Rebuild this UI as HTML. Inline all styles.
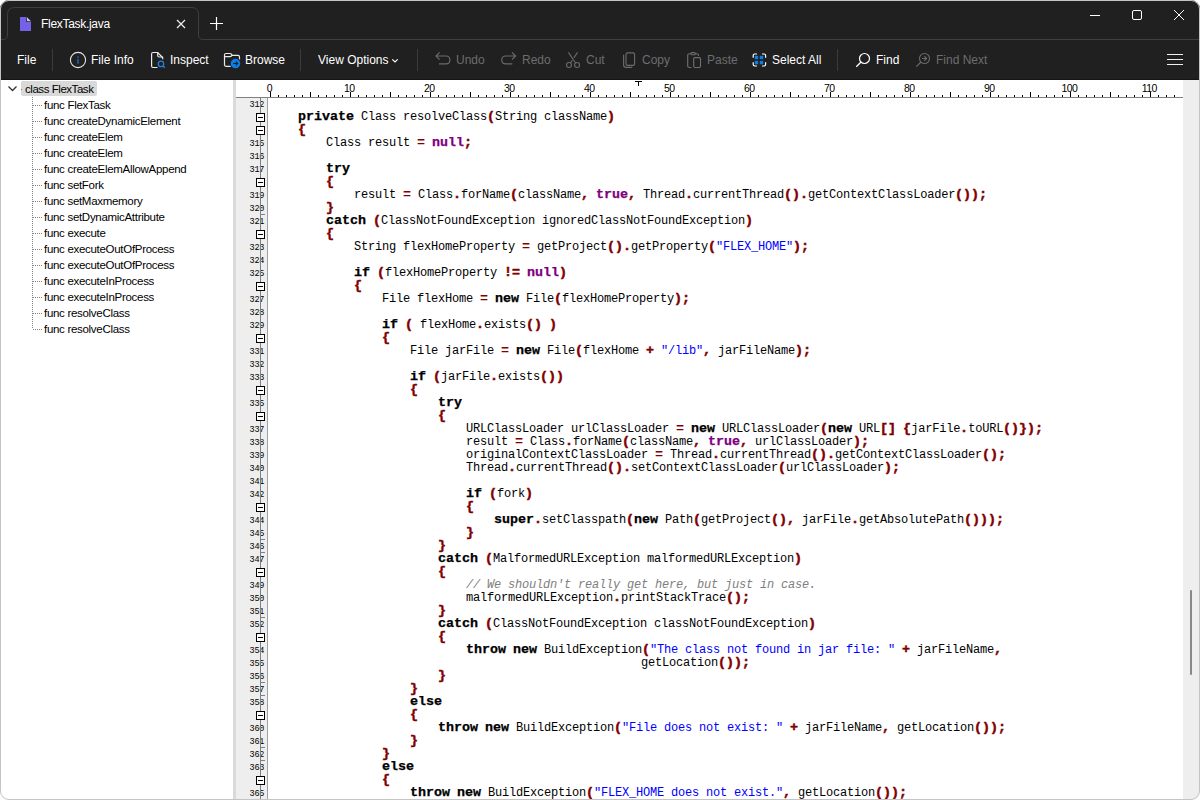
<!DOCTYPE html>
<html><head><meta charset="utf-8">
<style>
*{margin:0;padding:0;box-sizing:border-box}
html,body{width:1200px;height:800px;overflow:hidden;background:#ffffff}
body{position:relative;font-family:"Liberation Sans",sans-serif}
.win{position:absolute;left:0;top:0;width:1200px;height:800px;border-radius:9px;overflow:hidden;background:#fff}
.frame{position:absolute;left:0;top:0;width:1200px;height:800px;border:1px solid #c4c4c4;border-radius:9px}
.dark{position:absolute;left:0;top:0;width:1200px;height:80px;background:#202020}
.abs{position:absolute}
.tt{position:absolute;color:#ffffff;font-size:12px;white-space:nowrap;line-height:14px}
.dis{color:#6d6d6d}
.sep{position:absolute;top:49px;width:1px;height:22px;background:#3b3b3b}
.side{position:absolute;left:0;top:80px;width:233px;height:720px;background:#fff}
.split{position:absolute;left:233px;top:80px;width:3px;height:720px;background:#dadada}
.ruler{position:absolute;left:236px;top:80px;width:947px;height:18px;background:#fff}
.rbase{position:absolute;left:236px;top:97px;width:947px;height:1px;background:#808080}
.tk{position:absolute;width:1px;background:#000}
.rl{position:absolute;top:83px;width:40px;text-align:center;font-family:"Liberation Sans",sans-serif;font-size:10.5px;line-height:11px;color:#000;letter-spacing:-0.6px;text-indent:0.6px}
.gut{position:absolute;left:236px;top:98px;width:31px;height:702px;background:#eeeeee}
.fline{position:absolute;left:260px;top:98px;width:1px;height:702px;background:#808080}
.gborder{position:absolute;left:267px;top:98px;width:1px;height:702px;background:#a0a0a0}
.gn{position:absolute;left:236px;width:28px;text-align:right;font-family:"Liberation Mono",monospace;font-size:8.5px;line-height:13px;color:#000;letter-spacing:-0.3px}
.fb{position:absolute;left:256px;width:9px;height:9px;border:1px solid #000;background:#fff}
.fb::after{content:"";position:absolute;left:1px;top:3px;width:5px;height:1px;background:#000}
.em{position:absolute;left:261px;width:4px;height:1px;background:#808080}
.code{position:absolute;left:268px;top:98px;width:915px;height:702px;background:#fff}
.ln{position:absolute;white-space:pre;font-family:"Liberation Mono",monospace;font-size:12px;line-height:13px;height:13px;color:#000;letter-spacing:-0.2px}
.ln b{font-weight:bold;letter-spacing:0;-webkit-text-stroke:0.25px currentColor;display:inline-block;transform:scaleX(1.111);transform-origin:0 0;height:13px;vertical-align:top}
.ln i{font-style:normal}
.kw{color:#000}
.li{color:#800080}
.op{color:#800000}
.ln b.op{-webkit-text-stroke:0.45px currentColor}
.ln b.eq{-webkit-text-stroke:0}
.st{color:#0000ff}
.cm{color:#808080;font-style:italic !important}
.sb{position:absolute;left:1183px;top:80px;width:16px;height:720px;background:#eeeeee}
.thumb{position:absolute;left:1190px;top:590px;width:2px;height:85px;background:#888888;border-radius:1px}
.ti{position:absolute;left:44px;font-size:11.5px;line-height:16px;height:16px;color:#000;white-space:nowrap;letter-spacing:-0.3px}
.th{position:absolute;left:33px;width:9px;height:1px;background-image:linear-gradient(to right,#808080 50%,transparent 50%);background-size:2px 1px}
.tv{position:absolute;left:32px;top:97px;width:1px;height:232px;background-image:linear-gradient(to bottom,#808080 50%,transparent 50%);background-size:1px 2px}
</style></head><body>
<div class="win">
<div class="dark"></div>
<div class="abs" style="left:0;top:79px;width:1200px;height:1px;background:#151515"></div>
<!-- tab shape -->
<svg class="abs" style="left:0;top:0" width="1200" height="80" viewBox="0 0 1200 80">
 <path d="M0,39.5 H3 Q7.5,39.5 7.5,35 V14.5 Q7.5,7.5 14.5,7.5 H191.5 Q198.5,7.5 198.5,14.5 V35 Q198.5,39.5 203,39.5 H1200" fill="none" stroke="#3f3f3f" stroke-width="1"/>
 <!-- file icon -->
 <path d="M20,17 H26 L31,22 V31 H20 Z" fill="#7461e6"/>
 <path d="M26,17 L31,22 H26 Z" fill="#202020"/>
 <path d="M26.8,17 L31,21.2 H26.8 Z" fill="#c7bdfb"/>
 <!-- tab close -->
 <path d="M177,20 L185,28 M185,20 L177,28" stroke="#ededed" stroke-width="1.2"/>
 <!-- plus -->
 <path d="M210,23.5 H223 M216.5,17 V30" stroke="#ffffff" stroke-width="1.2"/>
 <!-- window controls -->
 <path d="M1090,15.5 H1100" stroke="#ffffff" stroke-width="1"/>
 <rect x="1132.5" y="10.5" width="9" height="9" rx="1.5" fill="none" stroke="#ffffff" stroke-width="1"/>
 <path d="M1174,10 L1184,20 M1184,10 L1174,20" stroke="#ffffff" stroke-width="1"/>
  <!-- info icon -->
 <circle cx="78" cy="60" r="7.6" fill="none" stroke="#e4e4e4" stroke-width="1.1"/>
 <path d="M78,59 V63.8" stroke="#1b64b3" stroke-width="1.6"/>
 <rect x="77.2" y="56.3" width="1.6" height="1.6" rx="0.4" fill="#1b64b3"/>
 <!-- inspect icon -->
 <path d="M157.5,67.5 H153 Q151.6,67.5 151.6,66 V54 Q151.6,52.5 153,52.5 H157.7 L162.7,57.5 V59.2" fill="none" stroke="#eaeaea" stroke-width="1.2"/>
 <path d="M157.7,52.5 V55.5 Q157.7,57 159.2,57 H162.7" fill="none" stroke="#eaeaea" stroke-width="1.2"/>
 <circle cx="161" cy="63.9" r="2.7" fill="#202020" stroke="#1f80e0" stroke-width="1.3"/>
 <path d="M162.9,65.8 L164.9,67.8" stroke="#1f80e0" stroke-width="1.4"/>
 <!-- browse icon -->
 <path d="M230.8,66.3 H226 Q224.5,66.3 224.5,64.8 V55 Q224.5,53.5 226,53.5 H230 Q231,53.5 231.6,54.4 L232.2,55.3 H238 Q239.5,55.3 239.5,56.8 V59.5" fill="none" stroke="#eaeaea" stroke-width="1.2"/>
 <path d="M224.5,56.7 H229.8 Q231,56.7 232,55.4" fill="none" stroke="#eaeaea" stroke-width="1.2"/>
 <circle cx="235.5" cy="63.5" r="5.2" fill="#0a7ee8" stroke="#202020" stroke-width="1"/>
 <path d="M233.2,63.5 H237.7 M235.8,61.6 L237.7,63.5 L235.8,65.4" fill="none" stroke="#1c1c1c" stroke-width="1.1"/>
 <!-- chevron -->
 <path d="M392.3,59.3 L395,62 L397.7,59.3" fill="none" stroke="#ffffff" stroke-width="1.2"/>
  <!-- undo -->
 <path d="M439.6,52.4 L436,56 L439.6,59.6 M436.5,56 H446 Q449.9,56 449.9,60 Q449.9,63.9 446,63.9 H439" fill="none" stroke="#6a6a6a" stroke-width="1.15"/>
 <!-- redo -->
 <path d="M512,52.4 L515.6,56 L512,59.6 M515.1,56 H505.6 Q501.8,56 501.8,60 Q501.8,63.9 505.6,63.9 H512.3" fill="none" stroke="#6a6a6a" stroke-width="1.15"/>
 <!-- cut -->
 <path d="M568.4,52.4 L575.7,63.2 M577.5,52.4 L573.8,57.9 M572.3,60.3 L570.6,62.9" fill="none" stroke="#6a6a6a" stroke-width="1.1"/>
 <circle cx="569" cy="65" r="2.5" fill="none" stroke="#6a6a6a" stroke-width="1.1"/>
 <circle cx="577.1" cy="65" r="2.5" fill="none" stroke="#6a6a6a" stroke-width="1.1"/>
 <!-- copy -->
 <rect x="626" y="52.8" width="8.6" height="12.6" rx="1.6" fill="none" stroke="#6a6a6a" stroke-width="1.15"/>
 <path d="M623.6,54.8 V65 Q623.6,67.4 626,67.4 H632.3" fill="none" stroke="#6a6a6a" stroke-width="1.15"/>
 <!-- paste -->
 <path d="M691.5,67.5 H689.2 Q687.7,67.5 687.7,66 V55.2 Q687.7,53.7 689.2,53.7 H690.8 M695.4,53.7 H696.9 Q698.4,53.7 698.4,55.2 V56" fill="none" stroke="#6e6e6e" stroke-width="1.15"/>
 <rect x="690.9" y="52.6" width="4.5" height="2.1" rx="1" fill="none" stroke="#6e6e6e" stroke-width="1.1"/>
 <rect x="693.7" y="57.6" width="6.8" height="9.9" rx="1.2" fill="none" stroke="#6e6e6e" stroke-width="1.15"/>
  <!-- select all -->
 <path d="M753.2,57.8 V55.4 Q753.2,54 754.6,54 H757 M762,54 H764.2 Q765.6,54 765.6,55.4 V57.8 M765.6,62.2 V64.6 Q765.6,66 764.2,66 H762 M757,66 H754.6 Q753.2,66 753.2,64.6 V62.2" fill="none" stroke="#ffffff" stroke-width="1.2"/>
 <rect x="754.8" y="55.8" width="3.4" height="3.4" fill="#0f7de3"/>
 <rect x="759.8" y="55.8" width="3.4" height="3.4" fill="#0f7de3"/>
 <rect x="754.8" y="60.9" width="3.4" height="3.4" fill="#0f7de3"/>
 <rect x="759.8" y="60.9" width="3.4" height="3.4" fill="#0f7de3"/>
 <!-- find -->
 <circle cx="864.5" cy="58.5" r="5" fill="none" stroke="#ffffff" stroke-width="1.2"/>
 <path d="M861,62 L856.3,66.7" stroke="#ffffff" stroke-width="1.3"/>
 <!-- find next -->
 <circle cx="924.5" cy="58.5" r="5" fill="none" stroke="#6a6a6a" stroke-width="1.1"/>
 <path d="M921,62 L916.3,66.7" stroke="#6a6a6a" stroke-width="1.2"/>
 <path d="M922,58.5 H926.6 M924.3,56.2 L926.6,58.5 L924.3,60.8" fill="none" stroke="#6a6a6a" stroke-width="1.15"/>
 <!-- hamburger -->
 <path d="M1167,54.5 H1183 M1167,59.5 H1183 M1167,64.5 H1183" stroke="#f0f0f0" stroke-width="1.1"/>
</svg>
<div class="tt" style="left:41px;top:17px;letter-spacing:-0.3px">FlexTask.java</div>
<div class="tt" style="left:17px;top:53px">File</div>
<div class="sep" style="left:52px"></div>
<div class="tt" style="left:91px;top:53px">File Info</div>
<div class="tt" style="left:170px;top:53px">Inspect</div>
<div class="tt" style="left:245px;top:53px">Browse</div>
<div class="sep" style="left:300px"></div>
<div class="tt" style="left:318px;top:53px">View Options</div>
<div class="sep" style="left:417px"></div>
<div class="tt dis" style="left:456px;top:53px">Undo</div>
<div class="tt dis" style="left:522px;top:53px">Redo</div>
<div class="tt dis" style="left:586px;top:53px">Cut</div>
<div class="tt dis" style="left:642px;top:53px">Copy</div>
<div class="tt dis" style="left:707px;top:53px">Paste</div>
<div class="tt" style="left:772px;top:53px">Select All</div>
<div class="sep" style="left:837px"></div>
<div class="tt" style="left:876px;top:53px">Find</div>
<div class="tt dis" style="left:936px;top:53px">Find Next</div>

<div class="side"></div>
<div class="abs" style="left:21px;top:81px;width:76px;height:15px;background:#d9d9d9;border-radius:2px"></div>
<svg class="abs" style="left:0;top:80px" width="40" height="20" viewBox="0 0 40 20"><path d="M8.5,6.5 L12.5,10.5 L16.5,6.5" fill="none" stroke="#333" stroke-width="1.3"/></svg>
<div class="ti" style="left:25px;top:81px;letter-spacing:-0.45px">class FlexTask</div>
<div class="abs" style="left:21px;top:89px;width:1px;height:1px;background:#808080"></div>
<div class="tv"></div>
<div class="ti" style="top:97px">func FlexTask</div>
<div class="th" style="top:105px"></div>
<div class="ti" style="top:113px">func createDynamicElement</div>
<div class="th" style="top:121px"></div>
<div class="ti" style="top:129px">func createElem</div>
<div class="th" style="top:137px"></div>
<div class="ti" style="top:145px">func createElem</div>
<div class="th" style="top:153px"></div>
<div class="ti" style="top:161px">func createElemAllowAppend</div>
<div class="th" style="top:169px"></div>
<div class="ti" style="top:177px">func setFork</div>
<div class="th" style="top:185px"></div>
<div class="ti" style="top:193px">func setMaxmemory</div>
<div class="th" style="top:201px"></div>
<div class="ti" style="top:209px">func setDynamicAttribute</div>
<div class="th" style="top:217px"></div>
<div class="ti" style="top:225px">func execute</div>
<div class="th" style="top:233px"></div>
<div class="ti" style="top:241px">func executeOutOfProcess</div>
<div class="th" style="top:249px"></div>
<div class="ti" style="top:257px">func executeOutOfProcess</div>
<div class="th" style="top:265px"></div>
<div class="ti" style="top:273px">func executeInProcess</div>
<div class="th" style="top:281px"></div>
<div class="ti" style="top:289px">func executeInProcess</div>
<div class="th" style="top:297px"></div>
<div class="ti" style="top:305px">func resolveClass</div>
<div class="th" style="top:313px"></div>
<div class="ti" style="top:321px">func resolveClass</div>
<div class="th" style="top:329px"></div>
<div class="split"></div>
<div class="ruler"></div>
<div class="tk" style="left:270px;top:92px;height:5px"></div>
<div class="rl" style="left:249px">0</div>
<div class="tk" style="left:278px;top:95px;height:2px"></div>
<div class="tk" style="left:286px;top:95px;height:2px"></div>
<div class="tk" style="left:294px;top:95px;height:2px"></div>
<div class="tk" style="left:302px;top:95px;height:2px"></div>
<div class="tk" style="left:310px;top:92px;height:5px"></div>
<div class="tk" style="left:318px;top:95px;height:2px"></div>
<div class="tk" style="left:326px;top:95px;height:2px"></div>
<div class="tk" style="left:334px;top:95px;height:2px"></div>
<div class="tk" style="left:342px;top:95px;height:2px"></div>
<div class="tk" style="left:350px;top:92px;height:5px"></div>
<div class="rl" style="left:329px">10</div>
<div class="tk" style="left:358px;top:95px;height:2px"></div>
<div class="tk" style="left:366px;top:95px;height:2px"></div>
<div class="tk" style="left:374px;top:95px;height:2px"></div>
<div class="tk" style="left:382px;top:95px;height:2px"></div>
<div class="tk" style="left:390px;top:92px;height:5px"></div>
<div class="tk" style="left:398px;top:95px;height:2px"></div>
<div class="tk" style="left:406px;top:95px;height:2px"></div>
<div class="tk" style="left:414px;top:95px;height:2px"></div>
<div class="tk" style="left:422px;top:95px;height:2px"></div>
<div class="tk" style="left:430px;top:92px;height:5px"></div>
<div class="rl" style="left:409px">20</div>
<div class="tk" style="left:438px;top:95px;height:2px"></div>
<div class="tk" style="left:446px;top:95px;height:2px"></div>
<div class="tk" style="left:454px;top:95px;height:2px"></div>
<div class="tk" style="left:462px;top:95px;height:2px"></div>
<div class="tk" style="left:470px;top:92px;height:5px"></div>
<div class="tk" style="left:478px;top:95px;height:2px"></div>
<div class="tk" style="left:486px;top:95px;height:2px"></div>
<div class="tk" style="left:494px;top:95px;height:2px"></div>
<div class="tk" style="left:502px;top:95px;height:2px"></div>
<div class="tk" style="left:510px;top:92px;height:5px"></div>
<div class="rl" style="left:489px">30</div>
<div class="tk" style="left:518px;top:95px;height:2px"></div>
<div class="tk" style="left:526px;top:95px;height:2px"></div>
<div class="tk" style="left:534px;top:95px;height:2px"></div>
<div class="tk" style="left:542px;top:95px;height:2px"></div>
<div class="tk" style="left:550px;top:92px;height:5px"></div>
<div class="tk" style="left:558px;top:95px;height:2px"></div>
<div class="tk" style="left:566px;top:95px;height:2px"></div>
<div class="tk" style="left:574px;top:95px;height:2px"></div>
<div class="tk" style="left:582px;top:95px;height:2px"></div>
<div class="tk" style="left:590px;top:92px;height:5px"></div>
<div class="rl" style="left:569px">40</div>
<div class="tk" style="left:598px;top:95px;height:2px"></div>
<div class="tk" style="left:606px;top:95px;height:2px"></div>
<div class="tk" style="left:614px;top:95px;height:2px"></div>
<div class="tk" style="left:622px;top:95px;height:2px"></div>
<div class="tk" style="left:630px;top:92px;height:5px"></div>
<div class="tk" style="left:638px;top:95px;height:2px"></div>
<div class="tk" style="left:646px;top:95px;height:2px"></div>
<div class="tk" style="left:654px;top:95px;height:2px"></div>
<div class="tk" style="left:662px;top:95px;height:2px"></div>
<div class="tk" style="left:670px;top:92px;height:5px"></div>
<div class="rl" style="left:649px">50</div>
<div class="tk" style="left:678px;top:95px;height:2px"></div>
<div class="tk" style="left:686px;top:95px;height:2px"></div>
<div class="tk" style="left:694px;top:95px;height:2px"></div>
<div class="tk" style="left:702px;top:95px;height:2px"></div>
<div class="tk" style="left:710px;top:92px;height:5px"></div>
<div class="tk" style="left:718px;top:95px;height:2px"></div>
<div class="tk" style="left:726px;top:95px;height:2px"></div>
<div class="tk" style="left:734px;top:95px;height:2px"></div>
<div class="tk" style="left:742px;top:95px;height:2px"></div>
<div class="tk" style="left:750px;top:92px;height:5px"></div>
<div class="rl" style="left:729px">60</div>
<div class="tk" style="left:758px;top:95px;height:2px"></div>
<div class="tk" style="left:766px;top:95px;height:2px"></div>
<div class="tk" style="left:774px;top:95px;height:2px"></div>
<div class="tk" style="left:782px;top:95px;height:2px"></div>
<div class="tk" style="left:790px;top:92px;height:5px"></div>
<div class="tk" style="left:798px;top:95px;height:2px"></div>
<div class="tk" style="left:806px;top:95px;height:2px"></div>
<div class="tk" style="left:814px;top:95px;height:2px"></div>
<div class="tk" style="left:822px;top:95px;height:2px"></div>
<div class="tk" style="left:830px;top:92px;height:5px"></div>
<div class="rl" style="left:809px">70</div>
<div class="tk" style="left:838px;top:95px;height:2px"></div>
<div class="tk" style="left:846px;top:95px;height:2px"></div>
<div class="tk" style="left:854px;top:95px;height:2px"></div>
<div class="tk" style="left:862px;top:95px;height:2px"></div>
<div class="tk" style="left:870px;top:92px;height:5px"></div>
<div class="tk" style="left:878px;top:95px;height:2px"></div>
<div class="tk" style="left:886px;top:95px;height:2px"></div>
<div class="tk" style="left:894px;top:95px;height:2px"></div>
<div class="tk" style="left:902px;top:95px;height:2px"></div>
<div class="tk" style="left:910px;top:92px;height:5px"></div>
<div class="rl" style="left:889px">80</div>
<div class="tk" style="left:918px;top:95px;height:2px"></div>
<div class="tk" style="left:926px;top:95px;height:2px"></div>
<div class="tk" style="left:934px;top:95px;height:2px"></div>
<div class="tk" style="left:942px;top:95px;height:2px"></div>
<div class="tk" style="left:950px;top:92px;height:5px"></div>
<div class="tk" style="left:958px;top:95px;height:2px"></div>
<div class="tk" style="left:966px;top:95px;height:2px"></div>
<div class="tk" style="left:974px;top:95px;height:2px"></div>
<div class="tk" style="left:982px;top:95px;height:2px"></div>
<div class="tk" style="left:990px;top:92px;height:5px"></div>
<div class="rl" style="left:969px">90</div>
<div class="tk" style="left:998px;top:95px;height:2px"></div>
<div class="tk" style="left:1006px;top:95px;height:2px"></div>
<div class="tk" style="left:1014px;top:95px;height:2px"></div>
<div class="tk" style="left:1022px;top:95px;height:2px"></div>
<div class="tk" style="left:1030px;top:92px;height:5px"></div>
<div class="tk" style="left:1038px;top:95px;height:2px"></div>
<div class="tk" style="left:1046px;top:95px;height:2px"></div>
<div class="tk" style="left:1054px;top:95px;height:2px"></div>
<div class="tk" style="left:1062px;top:95px;height:2px"></div>
<div class="tk" style="left:1070px;top:92px;height:5px"></div>
<div class="rl" style="left:1049px">100</div>
<div class="tk" style="left:1078px;top:95px;height:2px"></div>
<div class="tk" style="left:1086px;top:95px;height:2px"></div>
<div class="tk" style="left:1094px;top:95px;height:2px"></div>
<div class="tk" style="left:1102px;top:95px;height:2px"></div>
<div class="tk" style="left:1110px;top:92px;height:5px"></div>
<div class="tk" style="left:1118px;top:95px;height:2px"></div>
<div class="tk" style="left:1126px;top:95px;height:2px"></div>
<div class="tk" style="left:1134px;top:95px;height:2px"></div>
<div class="tk" style="left:1142px;top:95px;height:2px"></div>
<div class="tk" style="left:1150px;top:92px;height:5px"></div>
<div class="rl" style="left:1129px">110</div>
<div class="tk" style="left:1158px;top:95px;height:2px"></div>
<div class="tk" style="left:1166px;top:95px;height:2px"></div>
<div class="tk" style="left:1174px;top:95px;height:2px"></div>
<div class="abs" style="left:635px;top:81px;width:7px;height:1px;background:#000"></div>
<div class="abs" style="left:638px;top:81px;width:1px;height:5px;background:#000"></div>
<div class="rbase"></div>
<div class="gut"></div>
<div class="gborder"></div>
<div class="code"></div>
<div class="gn" style="top:99px">312</div>
<div class="gn" style="top:138px">315</div>
<div class="gn" style="top:151px">316</div>
<div class="gn" style="top:164px">317</div>
<div class="gn" style="top:190px">319</div>
<div class="gn" style="top:203px">320</div>
<div class="gn" style="top:216px">321</div>
<div class="gn" style="top:242px">323</div>
<div class="gn" style="top:255px">324</div>
<div class="gn" style="top:268px">325</div>
<div class="gn" style="top:294px">327</div>
<div class="gn" style="top:307px">328</div>
<div class="gn" style="top:320px">329</div>
<div class="gn" style="top:346px">331</div>
<div class="gn" style="top:359px">332</div>
<div class="gn" style="top:372px">333</div>
<div class="gn" style="top:398px">335</div>
<div class="gn" style="top:424px">337</div>
<div class="gn" style="top:437px">338</div>
<div class="gn" style="top:450px">339</div>
<div class="gn" style="top:463px">340</div>
<div class="gn" style="top:476px">341</div>
<div class="gn" style="top:489px">342</div>
<div class="gn" style="top:515px">344</div>
<div class="gn" style="top:528px">345</div>
<div class="gn" style="top:541px">346</div>
<div class="gn" style="top:554px">347</div>
<div class="gn" style="top:580px">349</div>
<div class="gn" style="top:593px">350</div>
<div class="gn" style="top:606px">351</div>
<div class="gn" style="top:619px">352</div>
<div class="gn" style="top:645px">354</div>
<div class="gn" style="top:658px">355</div>
<div class="gn" style="top:671px">356</div>
<div class="gn" style="top:684px">357</div>
<div class="gn" style="top:697px">358</div>
<div class="gn" style="top:723px">360</div>
<div class="gn" style="top:736px">361</div>
<div class="gn" style="top:749px">362</div>
<div class="gn" style="top:762px">363</div>
<div class="gn" style="top:788px">365</div>
<div class="fline"></div>
<div class="fb" style="top:113px"></div>
<div class="fb" style="top:126px"></div>
<div class="fb" style="top:178px"></div>
<div class="em" style="top:214px"></div>
<div class="fb" style="top:230px"></div>
<div class="fb" style="top:282px"></div>
<div class="fb" style="top:334px"></div>
<div class="fb" style="top:386px"></div>
<div class="fb" style="top:412px"></div>
<div class="fb" style="top:503px"></div>
<div class="em" style="top:539px"></div>
<div class="em" style="top:552px"></div>
<div class="fb" style="top:568px"></div>
<div class="em" style="top:617px"></div>
<div class="fb" style="top:633px"></div>
<div class="em" style="top:682px"></div>
<div class="em" style="top:695px"></div>
<div class="fb" style="top:711px"></div>
<div class="em" style="top:747px"></div>
<div class="em" style="top:760px"></div>
<div class="fb" style="top:776px"></div>
<div class="ln" style="top:98px;left:270px"></div>
<div class="ln" style="top:111px;left:298px"><b class="kw" style="width:56px">private</b> Class resolveClass<b class="op" style="width:8px">(</b>String className<b class="op" style="width:8px">)</b></div>
<div class="ln" style="top:124px;left:298px"><b class="op" style="width:8px">{</b></div>
<div class="ln" style="top:137px;left:326px">Class result <b class="op eq" style="width:8px">=</b> <b class="li" style="width:32px">null</b><b class="op" style="width:8px">;</b></div>
<div class="ln" style="top:150px;left:270px"></div>
<div class="ln" style="top:163px;left:326px"><b class="kw" style="width:24px">try</b></div>
<div class="ln" style="top:176px;left:326px"><b class="op" style="width:8px">{</b></div>
<div class="ln" style="top:189px;left:354px">result <b class="op eq" style="width:8px">=</b> Class<b class="op" style="width:8px">.</b>forName<b class="op" style="width:8px">(</b>className<b class="op" style="width:8px">,</b> <b class="li" style="width:32px">true</b><b class="op" style="width:8px">,</b> Thread<b class="op" style="width:8px">.</b>currentThread<b class="op" style="width:8px">(</b><b class="op" style="width:8px">)</b><b class="op" style="width:8px">.</b>getContextClassLoader<b class="op" style="width:8px">(</b><b class="op" style="width:8px">)</b><b class="op" style="width:8px">)</b><b class="op" style="width:8px">;</b></div>
<div class="ln" style="top:202px;left:326px"><b class="op" style="width:8px">}</b></div>
<div class="ln" style="top:215px;left:326px"><b class="kw" style="width:40px">catch</b> <b class="op" style="width:8px">(</b>ClassNotFoundException ignoredClassNotFoundException<b class="op" style="width:8px">)</b></div>
<div class="ln" style="top:228px;left:326px"><b class="op" style="width:8px">{</b></div>
<div class="ln" style="top:241px;left:354px">String flexHomeProperty <b class="op eq" style="width:8px">=</b> getProject<b class="op" style="width:8px">(</b><b class="op" style="width:8px">)</b><b class="op" style="width:8px">.</b>getProperty<b class="op" style="width:8px">(</b><i class="st">&quot;FLEX_HOME&quot;</i><b class="op" style="width:8px">)</b><b class="op" style="width:8px">;</b></div>
<div class="ln" style="top:254px;left:270px"></div>
<div class="ln" style="top:267px;left:354px"><b class="kw" style="width:16px">if</b> <b class="op" style="width:8px">(</b>flexHomeProperty <b class="op" style="width:16px">!=</b> <b class="li" style="width:32px">null</b><b class="op" style="width:8px">)</b></div>
<div class="ln" style="top:280px;left:354px"><b class="op" style="width:8px">{</b></div>
<div class="ln" style="top:293px;left:382px">File flexHome <b class="op eq" style="width:8px">=</b> <b class="kw" style="width:24px">new</b> File<b class="op" style="width:8px">(</b>flexHomeProperty<b class="op" style="width:8px">)</b><b class="op" style="width:8px">;</b></div>
<div class="ln" style="top:306px;left:270px"></div>
<div class="ln" style="top:319px;left:382px"><b class="kw" style="width:16px">if</b> <b class="op" style="width:8px">(</b> flexHome<b class="op" style="width:8px">.</b>exists<b class="op" style="width:8px">(</b><b class="op" style="width:8px">)</b> <b class="op" style="width:8px">)</b></div>
<div class="ln" style="top:332px;left:382px"><b class="op" style="width:8px">{</b></div>
<div class="ln" style="top:345px;left:410px">File jarFile <b class="op eq" style="width:8px">=</b> <b class="kw" style="width:24px">new</b> File<b class="op" style="width:8px">(</b>flexHome <b class="op" style="width:8px">+</b> <i class="st">&quot;/lib&quot;</i><b class="op" style="width:8px">,</b> jarFileName<b class="op" style="width:8px">)</b><b class="op" style="width:8px">;</b></div>
<div class="ln" style="top:358px;left:270px"></div>
<div class="ln" style="top:371px;left:410px"><b class="kw" style="width:16px">if</b> <b class="op" style="width:8px">(</b>jarFile<b class="op" style="width:8px">.</b>exists<b class="op" style="width:8px">(</b><b class="op" style="width:8px">)</b><b class="op" style="width:8px">)</b></div>
<div class="ln" style="top:384px;left:410px"><b class="op" style="width:8px">{</b></div>
<div class="ln" style="top:397px;left:438px"><b class="kw" style="width:24px">try</b></div>
<div class="ln" style="top:410px;left:438px"><b class="op" style="width:8px">{</b></div>
<div class="ln" style="top:423px;left:466px">URLClassLoader urlClassLoader <b class="op eq" style="width:8px">=</b> <b class="kw" style="width:24px">new</b> URLClassLoader<b class="op" style="width:8px">(</b><b class="kw" style="width:24px">new</b> URL<b class="op" style="width:8px">[</b><b class="op" style="width:8px">]</b> <b class="op" style="width:8px">{</b>jarFile<b class="op" style="width:8px">.</b>toURL<b class="op" style="width:8px">(</b><b class="op" style="width:8px">)</b><b class="op" style="width:8px">}</b><b class="op" style="width:8px">)</b><b class="op" style="width:8px">;</b></div>
<div class="ln" style="top:436px;left:466px">result <b class="op eq" style="width:8px">=</b> Class<b class="op" style="width:8px">.</b>forName<b class="op" style="width:8px">(</b>className<b class="op" style="width:8px">,</b> <b class="li" style="width:32px">true</b><b class="op" style="width:8px">,</b> urlClassLoader<b class="op" style="width:8px">)</b><b class="op" style="width:8px">;</b></div>
<div class="ln" style="top:449px;left:466px">originalContextClassLoader <b class="op eq" style="width:8px">=</b> Thread<b class="op" style="width:8px">.</b>currentThread<b class="op" style="width:8px">(</b><b class="op" style="width:8px">)</b><b class="op" style="width:8px">.</b>getContextClassLoader<b class="op" style="width:8px">(</b><b class="op" style="width:8px">)</b><b class="op" style="width:8px">;</b></div>
<div class="ln" style="top:462px;left:466px">Thread<b class="op" style="width:8px">.</b>currentThread<b class="op" style="width:8px">(</b><b class="op" style="width:8px">)</b><b class="op" style="width:8px">.</b>setContextClassLoader<b class="op" style="width:8px">(</b>urlClassLoader<b class="op" style="width:8px">)</b><b class="op" style="width:8px">;</b></div>
<div class="ln" style="top:475px;left:270px"></div>
<div class="ln" style="top:488px;left:466px"><b class="kw" style="width:16px">if</b> <b class="op" style="width:8px">(</b>fork<b class="op" style="width:8px">)</b></div>
<div class="ln" style="top:501px;left:466px"><b class="op" style="width:8px">{</b></div>
<div class="ln" style="top:514px;left:494px"><b class="kw" style="width:40px">super</b><b class="op" style="width:8px">.</b>setClasspath<b class="op" style="width:8px">(</b><b class="kw" style="width:24px">new</b> Path<b class="op" style="width:8px">(</b>getProject<b class="op" style="width:8px">(</b><b class="op" style="width:8px">)</b><b class="op" style="width:8px">,</b> jarFile<b class="op" style="width:8px">.</b>getAbsolutePath<b class="op" style="width:8px">(</b><b class="op" style="width:8px">)</b><b class="op" style="width:8px">)</b><b class="op" style="width:8px">)</b><b class="op" style="width:8px">;</b></div>
<div class="ln" style="top:527px;left:466px"><b class="op" style="width:8px">}</b></div>
<div class="ln" style="top:540px;left:438px"><b class="op" style="width:8px">}</b></div>
<div class="ln" style="top:553px;left:438px"><b class="kw" style="width:40px">catch</b> <b class="op" style="width:8px">(</b>MalformedURLException malformedURLException<b class="op" style="width:8px">)</b></div>
<div class="ln" style="top:566px;left:438px"><b class="op" style="width:8px">{</b></div>
<div class="ln" style="top:579px;left:466px"><i class="cm">// We shouldn&#x27;t really get here, but just in case.</i></div>
<div class="ln" style="top:592px;left:466px">malformedURLException<b class="op" style="width:8px">.</b>printStackTrace<b class="op" style="width:8px">(</b><b class="op" style="width:8px">)</b><b class="op" style="width:8px">;</b></div>
<div class="ln" style="top:605px;left:438px"><b class="op" style="width:8px">}</b></div>
<div class="ln" style="top:618px;left:438px"><b class="kw" style="width:40px">catch</b> <b class="op" style="width:8px">(</b>ClassNotFoundException classNotFoundException<b class="op" style="width:8px">)</b></div>
<div class="ln" style="top:631px;left:438px"><b class="op" style="width:8px">{</b></div>
<div class="ln" style="top:644px;left:466px"><b class="kw" style="width:40px">throw</b> <b class="kw" style="width:24px">new</b> BuildException<b class="op" style="width:8px">(</b><i class="st">&quot;The class not found in jar file: &quot;</i> <b class="op" style="width:8px">+</b> jarFileName<b class="op" style="width:8px">,</b></div>
<div class="ln" style="top:657px;left:270px">                                                     getLocation<b class="op" style="width:8px">(</b><b class="op" style="width:8px">)</b><b class="op" style="width:8px">)</b><b class="op" style="width:8px">;</b></div>
<div class="ln" style="top:670px;left:438px"><b class="op" style="width:8px">}</b></div>
<div class="ln" style="top:683px;left:410px"><b class="op" style="width:8px">}</b></div>
<div class="ln" style="top:696px;left:410px"><b class="kw" style="width:32px">else</b></div>
<div class="ln" style="top:709px;left:410px"><b class="op" style="width:8px">{</b></div>
<div class="ln" style="top:722px;left:438px"><b class="kw" style="width:40px">throw</b> <b class="kw" style="width:24px">new</b> BuildException<b class="op" style="width:8px">(</b><i class="st">&quot;File does not exist: &quot;</i> <b class="op" style="width:8px">+</b> jarFileName<b class="op" style="width:8px">,</b> getLocation<b class="op" style="width:8px">(</b><b class="op" style="width:8px">)</b><b class="op" style="width:8px">)</b><b class="op" style="width:8px">;</b></div>
<div class="ln" style="top:735px;left:410px"><b class="op" style="width:8px">}</b></div>
<div class="ln" style="top:748px;left:382px"><b class="op" style="width:8px">}</b></div>
<div class="ln" style="top:761px;left:382px"><b class="kw" style="width:32px">else</b></div>
<div class="ln" style="top:774px;left:382px"><b class="op" style="width:8px">{</b></div>
<div class="ln" style="top:787px;left:410px"><b class="kw" style="width:40px">throw</b> <b class="kw" style="width:24px">new</b> BuildException<b class="op" style="width:8px">(</b><i class="st">&quot;FLEX_HOME does not exist.&quot;</i><b class="op" style="width:8px">,</b> getLocation<b class="op" style="width:8px">(</b><b class="op" style="width:8px">)</b><b class="op" style="width:8px">)</b><b class="op" style="width:8px">;</b></div>
<div class="sb"></div>
<div class="thumb"></div>
</div>
<div class="frame"></div>
</body></html>
